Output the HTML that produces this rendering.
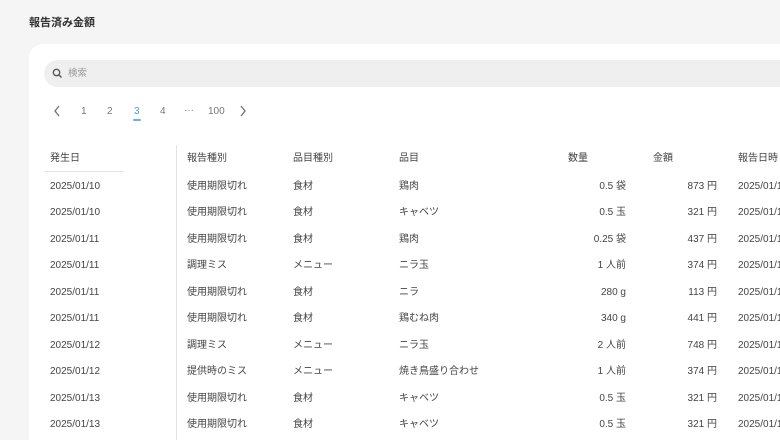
<!DOCTYPE html>
<html><head><meta charset="utf-8"><style>
*{margin:0;padding:0;box-sizing:border-box}
html,body{width:780px;height:440px;overflow:hidden}
body{background:#f5f5f5;font-family:"Liberation Sans","Noto Sans CJK JP",sans-serif;color:#444;font-size:10px;position:relative}
.a{position:absolute;white-space:nowrap;line-height:12px}
.r{text-align:right}
</style></head><body>
<div class="a" style="left:29px;top:17px;font-size:11px;font-weight:bold;color:#333">報告済み金額</div>
<div class="a" style="left:29px;top:44px;width:751px;height:396px;background:#fff;border-radius:14px 0 0 0"></div>
<div class="a" style="left:44px;top:60px;width:736px;height:27px;background:#efefef;border-radius:14px 0 0 14px"></div>
<svg class="a" style="left:52px;top:68px" width="11" height="11" viewBox="0 0 11 11"><circle cx="4.5" cy="4.5" r="3.2" fill="none" stroke="#555" stroke-width="1.3"/><path d="M7 7L9.5 9.5" stroke="#555" stroke-width="1.4"/></svg>
<div class="a" style="left:68px;top:68px;color:#999;font-size:9.5px">検索</div>
<svg class="a" style="left:53px;top:105px" width="8" height="12" viewBox="0 0 8 12"><path d="M6 1L2 6l4 5" fill="none" stroke="#777" stroke-width="1.4"/></svg>
<div class="a" style="left:81px;top:106px;color:#777">1</div>
<div class="a" style="left:107px;top:106px;color:#777">2</div>
<div class="a" style="left:134px;top:106px;color:#4a9be8">3</div>
<div class="a" style="left:133px;top:119px;width:8px;height:2px;background:#6aaef0;border-radius:1px"></div>
<div class="a" style="left:160px;top:106px;color:#777">4</div>
<div class="a" style="left:184px;top:105px;color:#777">···</div>
<div class="a" style="left:208px;top:106px;color:#777">100</div>
<svg class="a" style="left:239px;top:105px" width="8" height="12" viewBox="0 0 8 12"><path d="M2 1l4 5-4 5" fill="none" stroke="#777" stroke-width="1.4"/></svg>
<div class="a" style="left:44px;top:171px;width:80px;height:1px;background:#e5e5e5"></div>
<div class="a" style="left:176px;top:145px;width:1px;height:295px;background:#e3e3e3"></div>
<div id="t"></div>
<script>
var h=[["発生日",50],["報告種別",187],["品目種別",293],["品目",399],["数量",568],["金額",653],["報告日時",738]];
var s="";h.forEach(function(c){s+='<div class="a" style="left:'+c[1]+'px;top:153px">'+c[0]+'</div>'});
var d=[["2025/01/10","使用期限切れ","食材","鶏肉","0.5 袋","873 円"],["2025/01/10","使用期限切れ","食材","キャベツ","0.5 玉","321 円"],["2025/01/11","使用期限切れ","食材","鶏肉","0.25 袋","437 円"],["2025/01/11","調理ミス","メニュー","ニラ玉","1 人前","374 円"],["2025/01/11","使用期限切れ","食材","ニラ","280 g","113 円"],["2025/01/11","使用期限切れ","食材","鶏むね肉","340 g","441 円"],["2025/01/12","調理ミス","メニュー","ニラ玉","2 人前","748 円"],["2025/01/12","提供時のミス","メニュー","焼き鳥盛り合わせ","1 人前","374 円"],["2025/01/13","使用期限切れ","食材","キャベツ","0.5 玉","321 円"],["2025/01/13","使用期限切れ","食材","キャベツ","0.5 玉","321 円"]];
d.forEach(function(r,i){var y=180.5+i*26.5;
s+='<div class="a" style="left:50px;top:'+y+'px">'+r[0]+'</div>';
s+='<div class="a" style="left:187px;top:'+y+'px">'+r[1]+'</div>';
s+='<div class="a" style="left:293px;top:'+y+'px">'+r[2]+'</div>';
s+='<div class="a" style="left:399px;top:'+y+'px">'+r[3]+'</div>';
s+='<div class="a r" style="left:526px;width:100px;top:'+y+'px">'+r[4]+'</div>';
s+='<div class="a r" style="left:617px;width:100px;top:'+y+'px">'+r[5]+'</div>';
s+='<div class="a" style="left:738px;top:'+y+'px">'+r[0].slice(0,9)+(i<2?'0':i<6?'1':i<8?'2':'3')+'</div>';});
document.getElementById("t").innerHTML=s;
</script>
</body></html>
